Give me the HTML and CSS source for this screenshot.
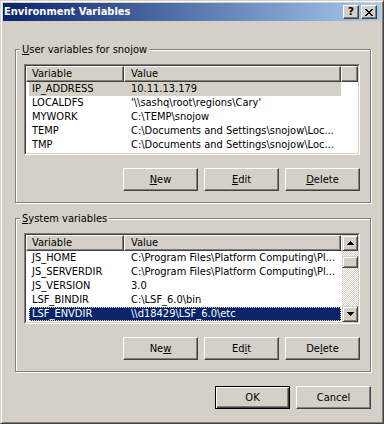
FILE: index.html
```html
<!DOCTYPE html>
<html>
<head>
<meta charset="utf-8">
<title>Environment Variables</title>
<link rel="stylesheet" href="styles.css">
</head>
<body>
<div class="window">
  <div class="titlebar">
    <span class="title">Environment Variables</span>
    <div class="tb-buttons">
      <span class="tb-btn help">?</span>
      <span class="tb-btn close"><svg width="8" height="7" viewBox="0 0 8 7"><path d="M0 0h2v1h1v1h2V1h1V0h2v1H7v1H6v1H5v1h1v1h1v1h1v1H6V6H5V5H3v1H2v1H0V6h1V5h1V4h1V3H2V2H1V1H0z" fill="#000"/></svg></span>
    </div>
  </div>
  <div class="content">
    <fieldset class="group">
      <legend><u>U</u>ser variables for snojow</legend>
      <div class="group-body">
        <div class="list">
          <div class="list-inner">
            <div class="list-main">
              <div class="header"><div class="hcell hc1">Variable</div><div class="hcell hc2">Value</div><div class="hcell filler"></div></div>
              <div class="row sel-inactive"><span class="c1">IP_ADDRESS</span><span class="c2">10.11.13.179</span></div>
              <div class="row"><span class="c1">LOCALDFS</span><span class="c2">'\\sashq\root\regions\Cary'</span></div>
              <div class="row"><span class="c1">MYWORK</span><span class="c2">C:\TEMP\snojow</span></div>
              <div class="row"><span class="c1">TEMP</span><span class="c2">C:\Documents and Settings\snojow\Loc...</span></div>
              <div class="row"><span class="c1">TMP</span><span class="c2">C:\Documents and Settings\snojow\Loc...</span></div>
            </div>
          </div>
        </div>
        <div class="btn-row">
          <button class="btn"><u>N</u>ew</button>
          <button class="btn"><u>E</u>dit</button>
          <button class="btn"><u>D</u>elete</button>
        </div>
      </div>
    </fieldset>
    <fieldset class="group">
      <legend><u>S</u>ystem variables</legend>
      <div class="group-body">
        <div class="list">
          <div class="list-inner">
            <div class="list-main">
              <div class="header"><div class="hcell hc1">Variable</div><div class="hcell hc2">Value</div><div class="hcell filler"></div></div>
              <div class="row"><span class="c1">JS_HOME</span><span class="c2">C:\Program Files\Platform Computing\Pl...</span></div>
              <div class="row"><span class="c1">JS_SERVERDIR</span><span class="c2">C:\Program Files\Platform Computing\Pl...</span></div>
              <div class="row"><span class="c1">JS_VERSION</span><span class="c2">3.0</span></div>
              <div class="row"><span class="c1">LSF_BINDIR</span><span class="c2">C:\LSF_6.0\bin</span></div>
              <div class="row sel"><span class="c1">LSF_ENVDIR</span><span class="c2">\\d18429\LSF_6.0\etc</span></div>
            </div>
            <div class="scrollbar">
              <div class="sb-btn"><svg width="7" height="4" viewBox="0 0 7 4"><path d="M3 0h1v1h1v1h1v1h1v1H0V3h1V2h1V1h1z" fill="#000"/></svg></div>
              <div class="sb-track"><div class="sb-thumb"></div></div>
              <div class="sb-btn"><svg width="7" height="4" viewBox="0 0 7 4"><path d="M0 0h7v1H6v1H5v1H4v1H3V3H2V2H1V1H0z" fill="#000"/></svg></div>
            </div>
          </div>
        </div>
        <div class="btn-row">
          <button class="btn">Ne<u>w</u></button>
          <button class="btn">Ed<u>i</u>t</button>
          <button class="btn">De<u>l</u>ete</button>
        </div>
      </div>
    </fieldset>
    <div class="dialog-btns">
      <button class="btn default">OK</button>
      <button class="btn">Cancel</button>
    </div>
  </div>
</div>
</body>
</html>
```
FILE: styles.css
```css
* { box-sizing: border-box; }
html, body { margin: 0; padding: 0; }
body {
  width: 384px;
  height: 424px;
  overflow: hidden;
  background: #d4d0c8;
  font-family: "DejaVu Sans Condensed", "DejaVu Sans", sans-serif;
  font-size: 11px;
  color: #000;
}
.window {
  width: 384px;
  height: 424px;
  border: 1px solid;
  border-color: #d4d0c8 #404040 #404040 #d4d0c8;
  box-shadow: inset 1px 1px #fff, inset -1px -1px #808080;
  padding: 2px;
  display: flex;
  flex-direction: column;
  background: #d4d0c8;
}
.titlebar {
  height: 18px;
  flex: none;
  display: flex;
  align-items: center;
  justify-content: space-between;
  padding: 0 4px 0 1px;
  background: linear-gradient(to right, #0a246a, #a6caf0);
  color: #fff;
  font-weight: bold;
}
.title { line-height: 14px; }
.tb-buttons { display: flex; gap: 2px; }
.tb-btn {
  width: 16px;
  height: 14px;
  border: 1px solid;
  border-color: #fff #404040 #404040 #fff;
  box-shadow: inset -1px -1px #808080;
  background: #d4d0c8;
  display: flex;
  align-items: center;
  justify-content: center;
  color: #000;
  font-family: "DejaVu Sans", sans-serif;
  font-weight: bold;
  font-size: 11px;
  line-height: 12px;
}
.content {
  flex: 1;
  display: flex;
  flex-direction: column;
  padding: 22px 10px 0 12px;
}
.group {
  margin: 0;
  padding: 0;
  min-width: 0;
  border: 1px solid #808080;
  box-shadow: inset 1px 1px #fff, 1px 1px #fff;
}
.group + .group { margin-top: 9px; }
.group legend {
  margin-left: 4px;
  padding: 0 2px;
  line-height: 13px;
  background: #d4d0c8;
}
.group-body { padding: 8px 10px 11px 8px; }
.list {
  height: 91px;
  border: 1px solid;
  border-color: #808080 #fff #fff #808080;
  background: #fff;
}
.list-inner {
  height: 100%;
  border: 1px solid;
  border-color: #404040 #d4d0c8 #d4d0c8 #404040;
  display: flex;
  overflow: hidden;
}
.list-main { flex: 1; min-width: 0; overflow: hidden; }
.header { display: flex; height: 16px; }
.hcell {
  flex: none;
  height: 16px;
  border: 1px solid;
  border-color: #fff #404040 #404040 #fff;
  box-shadow: inset -1px -1px #808080;
  background: #d4d0c8;
  line-height: 14px;
  padding-left: 5px;
  white-space: nowrap;
}
.hc1 { width: 98px; }
.hc2 { width: 217px; padding-left: 6px; }
.filler { flex: 1 0 auto; padding: 0; }
.row {
  display: flex;
  height: 14px;
  line-height: 14px;
  margin-left: 3px;
  width: 312px;
  white-space: nowrap;
}
.row .c1 { flex: none; width: 95px; padding-left: 3px; overflow: hidden; }
.row .c2 { flex: none; width: 217px; padding-left: 7px; overflow: hidden; }
.row.sel-inactive { background: #d4d0c8; }
.row.sel {
  background: #0a246a;
  color: #fff;
  outline: 1px dotted #e8d890;
  outline-offset: -1px;
}
.scrollbar {
  width: 16px;
  flex: none;
  display: flex;
  flex-direction: column;
}
.sb-btn, .sb-thumb {
  border: 1px solid;
  border-color: #d4d0c8 #404040 #404040 #d4d0c8;
  box-shadow: inset 1px 1px #fff, inset -1px -1px #808080;
  background: #d4d0c8;
}
.sb-btn {
  height: 16px;
  flex: none;
  display: flex;
  align-items: center;
  justify-content: center;
}
.sb-track {
  flex: 1;
  padding-top: 5px;
  background: repeating-conic-gradient(#fff 0 25%, #d4d0c8 0 50%) 0 0 / 2px 2px;
}
.sb-thumb { height: 12px; }
.btn-row, .dialog-btns {
  display: flex;
  justify-content: flex-end;
  gap: 6px;
}
.btn-row { margin-top: 13px; }
.dialog-btns { margin-top: 14px; }
.btn {
  width: 75px;
  height: 23px;
  margin: 0;
  padding: 0;
  border: 1px solid;
  border-color: #fff #404040 #404040 #fff;
  box-shadow: inset -1px -1px #808080;
  background: #d4d0c8;
  font: inherit;
  color: #000;
  line-height: 20px;
  text-align: center;
}
.btn.default {
  border: 1px solid #000;
  box-shadow: inset 1px 1px #fff, inset -1px -1px #404040, inset -2px -2px #808080;
}
```
